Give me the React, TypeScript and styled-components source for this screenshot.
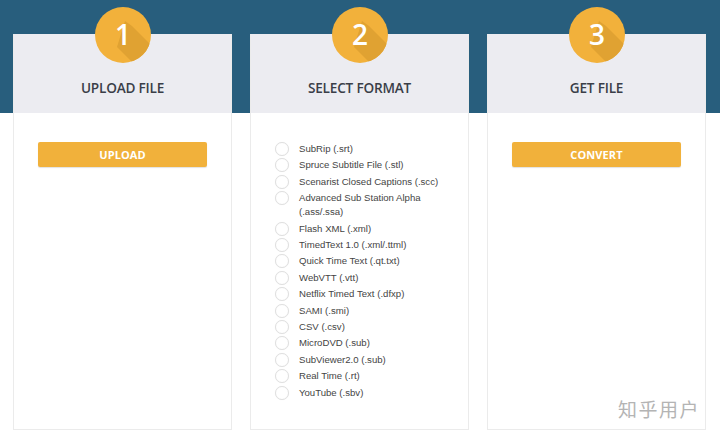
import React from 'react'
import styled, { createGlobalStyle } from 'styled-components'

const GlobalStyle = createGlobalStyle`
  html, body {
    margin: 0;
    padding: 0;
    background: #ffffff;
  }
  body {
    font-family: "Open Sans", "Liberation Sans", sans-serif;
  }
`

const formats = [
  'SubRip (.srt)',
  'Spruce Subtitle File (.stl)',
  'Scenarist Closed Captions (.scc)',
  'Advanced Sub Station Alpha (.ass/.ssa)',
  'Flash XML (.xml)',
  'TimedText 1.0 (.xml/.ttml)',
  'Quick Time Text (.qt.txt)',
  'WebVTT (.vtt)',
  'Netflix Timed Text (.dfxp)',
  'SAMI (.smi)',
  'CSV (.csv)',
  'MicroDVD (.sub)',
  'SubViewer2.0 (.sub)',
  'Real Time (.rt)',
  'YouTube (.sbv)',
]

const StepBadge = ({ n }: { n: number }) => (
  <Badge viewBox="0 0 56 56" width={56} height={56}>
    <defs>
      <clipPath id={`clip-${n}`}>
        <circle cx="28" cy="28" r="28" />
      </clipPath>
    </defs>
    <circle cx="28" cy="28" r="28" fill="#f2b13b" />
    <polygon
      points="30,14 37,19 70,52 52,70 22,40"
      fill="#e0a232"
      clipPath={`url(#clip-${n})`}
    />
    <text
      x="28"
      y="38"
      textAnchor="middle"
      fontSize="28"
      fontWeight="600"
      fill="#ffffff"
      fontFamily="'Open Sans', 'Liberation Sans', sans-serif"
    >
      {n}
    </text>
  </Badge>
)

export default function App() {
  return (
    <>
      <GlobalStyle />
      <Page>
        <Steps>
          <Card>
            <CardHead>
              <StepBadge n={1} />
              <Title>UPLOAD FILE</Title>
            </CardHead>
            <CardBody>
              <ActionButton>UPLOAD</ActionButton>
            </CardBody>
          </Card>
          <Card>
            <CardHead>
              <StepBadge n={2} />
              <Title>SELECT FORMAT</Title>
            </CardHead>
            <CardBody>
              <FormatList>
                {formats.map((f) => (
                  <FormatItem key={f}>
                    <Radio />
                    <FormatLabel>{f}</FormatLabel>
                  </FormatItem>
                ))}
              </FormatList>
            </CardBody>
          </Card>
          <Card>
            <CardHead>
              <StepBadge n={3} />
              <Title>GET FILE</Title>
            </CardHead>
            <CardBody>
              <ActionButton>CONVERT</ActionButton>
            </CardBody>
          </Card>
        </Steps>
        <Watermark>知乎用户</Watermark>
      </Page>
    </>
  )
}

const Page = styled.div`
  position: relative;
  width: 720px;
  height: 436px;
  overflow: hidden;
  background: linear-gradient(to bottom, #285e7d 0, #285e7d 113px, #ffffff 113px);
`

const Steps = styled.div`
  display: flex;
  gap: 18px;
  padding: 34px 0 0 13px;
`

const Card = styled.div`
  width: 219px;
  height: 396px;
  box-sizing: border-box;
  background: #ffffff;
  border: 1px solid #ebebeb;
  border-top: none;
  display: flex;
  flex-direction: column;
`

const CardHead = styled.div`
  height: 79px;
  background: #ececf1;
  display: flex;
  flex-direction: column;
  align-items: center;
`

const Badge = styled.svg`
  display: block;
  margin-top: -27px;
`

const Title = styled.h2`
  margin: 16px 0 0;
  font-size: 13.6px;
  font-weight: 600;
  letter-spacing: -0.2px;
  color: #3a3e48;
  line-height: 18px;
`

const CardBody = styled.div`
  flex: 1;
  padding: 29px 24px 0;
`

const ActionButton = styled.button`
  display: block;
  width: 100%;
  height: 25px;
  border: none;
  border-radius: 2px;
  background: #f1b13b;
  box-shadow: 0 1px 1px rgba(0, 0, 0, 0.12);
  color: #ffffff;
  font-family: "Open Sans", "Liberation Sans", sans-serif;
  font-size: 11px;
  font-weight: 700;
  letter-spacing: 0.1px;
  cursor: pointer;
`

const FormatList = styled.ul`
  list-style: none;
  margin: 0;
  padding: 0;
  display: flex;
  flex-direction: column;
  gap: 2.42px;
`

const FormatItem = styled.li`
  display: flex;
  align-items: flex-start;
  gap: 10px;
`

const Radio = styled.span`
  flex: none;
  width: 14px;
  height: 14px;
  box-sizing: border-box;
  border-radius: 50%;
  border: 1px solid #dfdfdf;
  background: #ffffff;
  box-shadow: 0 0 1px rgba(0, 0, 0, 0.06);
`

const FormatLabel = styled.span`
  width: 150px;
  font-family: "Liberation Sans", Arial, sans-serif;
  font-size: 9.6px;
  line-height: 14px;
  color: #444444;
`

const Watermark = styled.div`
  position: absolute;
  right: 20px;
  bottom: 14px;
  font-family: "Noto Sans CJK SC", sans-serif;
  font-size: 19px;
  letter-spacing: 1.5px;
  color: #b4b4b4;
  text-shadow: 0 0 1px rgba(255, 255, 255, 0.8);
`
